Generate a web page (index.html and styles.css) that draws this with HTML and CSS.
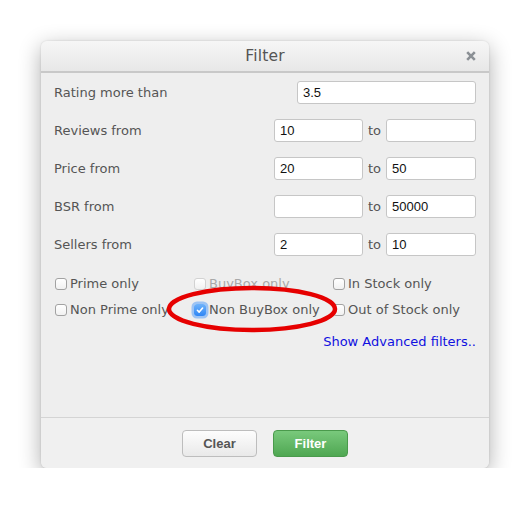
FILE: index.html
```html
<!DOCTYPE html>
<html>
<head>
<meta charset="utf-8">
<link rel="stylesheet" href="styles.css">
</head>
<body>
<div class="dialog">
  <div class="header">
    <span class="title">Filter</span>
    <svg class="close" width="10" height="10" viewBox="0 0 10 10"><path d="M1.2 1.2 L8.8 8.8 M8.8 1.2 L1.2 8.8" stroke="#8b9095" stroke-width="2.6" stroke-linecap="butt"/></svg>
  </div>
  <div class="content">
    <div class="row">
      <span class="label">Rating more than</span>
      <input class="field wide" type="text" value="3.5">
    </div>
    <div class="row">
      <span class="label">Reviews from</span>
      <div class="range"><input class="field" type="text" value="10"><span class="to">to</span><input class="field" type="text" value=""></div>
    </div>
    <div class="row">
      <span class="label">Price from</span>
      <div class="range"><input class="field" type="text" value="20"><span class="to">to</span><input class="field" type="text" value="50"></div>
    </div>
    <div class="row">
      <span class="label">BSR from</span>
      <div class="range"><input class="field" type="text" value=""><span class="to">to</span><input class="field" type="text" value="50000"></div>
    </div>
    <div class="row">
      <span class="label">Sellers from</span>
      <div class="range"><input class="field" type="text" value="2"><span class="to">to</span><input class="field" type="text" value="10"></div>
    </div>
    <div class="checks">
      <label class="check"><span class="box"></span>Prime only</label>
      <label class="check disabled"><span class="box"></span>BuyBox only</label>
      <label class="check"><span class="box"></span>In Stock only</label>
      <label class="check"><span class="box"></span>Non Prime only</label>
      <label class="check"><span class="box checked"><svg viewBox="0 0 12 12" width="12" height="12"><path d="M3.4 6.3 L5.2 8.1 L8.6 4" fill="none" stroke="#fff" stroke-width="1.6" stroke-linecap="round" stroke-linejoin="round"/></svg></span>Non BuyBox only</label>
      <label class="check"><span class="box"></span>Out of Stock only</label>
    </div>
    <div class="more"><a class="link">Show Advanced filters..</a></div>
  </div>
  <div class="footer">
    <button class="btn clear">Clear</button>
    <button class="btn primary">Filter</button>
  </div>
  <svg class="mark" width="180" height="54" viewBox="0 0 180 54"><ellipse cx="90" cy="27" rx="83" ry="21" fill="none" stroke="#e60000" stroke-width="4.5"/></svg>
</div>
</body>
</html>
```

FILE: styles.css
```css
html, body {
  margin: 0;
  padding: 0;
  background: #ffffff;
}
body {
  padding: 41px 0 0 41px;
  font-family: "DejaVu Sans", Verdana, sans-serif;
}
.dialog {
  position: relative;
  width: 448px;
  height: 427px;
  background: #eeeeee;
  border-radius: 6px;
  box-shadow: 0 6px 22px rgba(0, 0, 0, 0.32), 0 0 2px rgba(0, 0, 0, 0.15);
  display: flex;
  flex-direction: column;
  overflow: hidden;
}
.header {
  height: 30px;
  flex: none;
  background: linear-gradient(#f6f6f6, #e7e7e7);
  border-bottom: 2px solid #c8c8c8;
  display: flex;
  align-items: center;
  justify-content: center;
  position: relative;
}
.title {
  font-size: 15.5px;
  color: #555555;
  letter-spacing: 0.2px;
}
.close {
  position: absolute;
  right: 13px;
  top: 10px;
}
.content {
  flex: 1;
  padding: 0 13px;
  display: flex;
  flex-direction: column;
}
.row {
  height: 38px;
  display: flex;
  align-items: center;
}
.label {
  flex: 1;
  font-size: 13px;
  color: #555555;
}
.field {
  box-sizing: border-box;
  height: 23px;
  width: 89px;
  border: 1px solid #c6c6c6;
  border-radius: 3px;
  background: #ffffff;
  padding: 0 5px;
  font-family: "Liberation Sans", Arial, sans-serif;
  font-size: 13px;
  color: #111111;
  margin: 0;
  outline: none;
}
.field.wide {
  width: 179px;
}
.range {
  display: flex;
  align-items: center;
}
.range .field:last-child {
  width: 90px;
}
.to {
  width: 23px;
  text-align: center;
  font-size: 13px;
  color: #555555;
}
.checks {
  margin-top: 8px;
  display: grid;
  grid-template-columns: 139px 139px 139px;
  grid-auto-rows: 26px;
  margin-left: 1px;
}
.check {
  display: flex;
  align-items: center;
  font-size: 13px;
  color: #555555;
  white-space: nowrap;
  position: relative;
  top: -1px;
}
.check.disabled {
  color: #a9a9a9;
}
.box {
  box-sizing: border-box;
  width: 12px;
  height: 12px;
  border: 1px solid #a2a2a2;
  border-radius: 3px;
  background: linear-gradient(#ffffff, #f1f1f1);
  margin-right: 3px;
  flex: none;
  position: relative;
  top: 1px;
  display: flex;
}
.check.disabled .box {
  border-color: #d2d2d2;
}
.box.checked {
  border: none;
  background: linear-gradient(#6fb3fb, #2f86f5);
  box-shadow: 0 0 0 2.5px rgba(90, 160, 250, 0.55);
}
.more {
  margin-top: 9px;
  height: 18px;
  display: flex;
  justify-content: flex-end;
  align-items: center;
}
.link {
  font-size: 13px;
  color: #1010e0;
}
.footer {
  flex: none;
  height: 50px;
  border-top: 1px solid #d4d4d4;
  background: #f0f0f0;
  display: flex;
  align-items: center;
  justify-content: center;
  gap: 16px;
}
.btn {
  box-sizing: border-box;
  width: 75px;
  height: 27px;
  border-radius: 4px;
  font-family: "Liberation Sans", Arial, sans-serif;
  font-size: 13px;
  font-weight: bold;
  padding: 0;
  margin: 0;
}
.btn.clear {
  border: 1px solid #bdbdbd;
  background: linear-gradient(#fdfdfd, #e9e9e9);
  color: #555555;
}
.btn.primary {
  border: 1px solid #4a9a4c;
  background: linear-gradient(#79c97c, #4fa752);
  color: #ffffff;
}
.mark {
  position: absolute;
  left: 121px;
  top: 241px;
  overflow: visible;
}
```
